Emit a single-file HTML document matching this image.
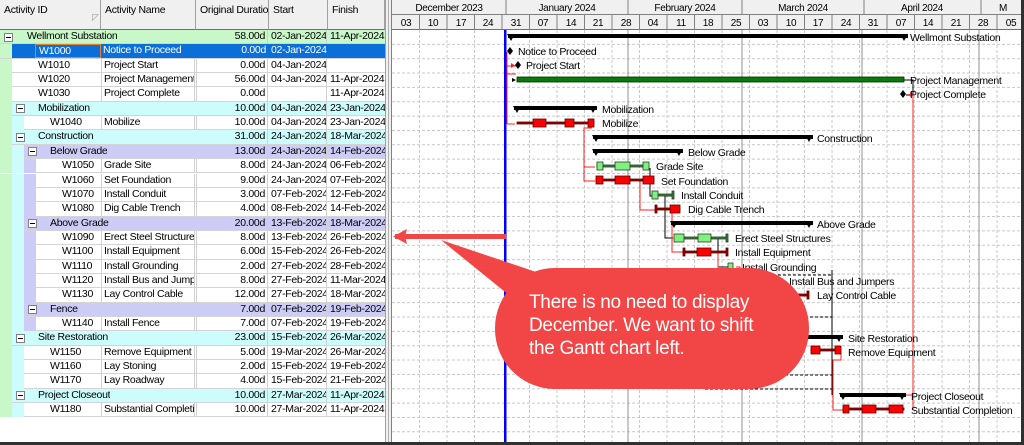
<!DOCTYPE html>
<html><head><meta charset="utf-8"><style>
*{margin:0;padding:0;box-sizing:border-box}
body{width:1024px;height:445px;overflow:hidden;background:#fff;font-family:"Liberation Sans",Arial,sans-serif;font-size:10.5px;letter-spacing:-0.3px;color:#000;position:relative}
.hd{position:absolute;top:0;height:30px;background:#f0f0f0;border-right:1px solid #a0a0a0;border-bottom:1px solid #707070;padding:4px 0 0 4px;font-size:10.5px;white-space:nowrap;overflow:hidden}
.r{position:absolute;left:0;width:385px;height:14.35px;border-bottom:1px solid #d4d4d4;line-height:13px;white-space:nowrap}
.r>div{position:absolute;top:0;height:13.5px;overflow:hidden}
.g{background:#c8f7c8}.c{background:#ccfcfc}.l{background:#ccccf6}.w{background:#fff}
.b{border-right:1px solid #d0d0d0}
.mb{position:absolute;width:9px!important;height:9px!important;top:2.5px!important;border:1px solid #808080;background:#fff}
.mb:after{content:"";position:absolute;left:1px;top:3px;width:5px;height:1px;background:#000}
.du{left:196px;width:72px;text-align:right;padding-right:2px}
.st{left:269px;width:58px;padding-left:2px}
.fi{left:328px;width:57px;padding-left:2px}
.nm{left:101px;width:94px;padding-left:2px;overflow:hidden}
svg text{letter-spacing:-0.3px}
</style></head><body>
<div class="hd" style="left:0;width:101px">Activity ID<span style="position:absolute;left:92px;top:12px;color:#999;font-size:9px">◸</span></div>
<div class="hd" style="left:101px;width:95px">Activity Name</div>
<div class="hd" style="left:196px;width:73px">Original Duration</div>
<div class="hd" style="left:269px;width:59px">Start</div>
<div class="hd" style="left:328px;width:57px">Finish</div>

<div class="r g" style="top:30px"><div class="mb" style="left:4px"></div><div style="left:27px">Wellmont Substation</div><div class="du b">58.00d</div><div class="st b">02-Jan-2024</div><div class="fi">11-Apr-2024</div></div>
<div class="r" style="top:44.35px;background:#0a6fd8;color:#fff"><div class="g" style="left:0;width:12px"></div><div style="left:35px;width:66px;border:1px solid #e08030;padding-left:3px">W1000</div><div class="nm">Notice to Proceed</div><div class="du">0.00d</div><div class="st">02-Jan-2024</div><div class="fi"></div></div>
<div class="r w" style="top:58.7px"><div class="g" style="left:0;width:12px;height:14.35px"></div><div style="left:38px">W1010</div><div class="nm b" style="border-left:1px solid #d0d0d0">Project Start</div><div class="du b" style="border-left:1px solid #d0d0d0">0.00d</div><div class="st b">04-Jan-2024</div><div class="fi"></div></div>
<div class="r w" style="top:73.05px"><div class="g" style="left:0;width:12px;height:14.35px"></div><div style="left:38px">W1020</div><div class="nm b" style="border-left:1px solid #d0d0d0">Project Management</div><div class="du b" style="border-left:1px solid #d0d0d0">56.00d</div><div class="st b">04-Jan-2024</div><div class="fi">11-Apr-2024</div></div>
<div class="r w" style="top:87.4px"><div class="g" style="left:0;width:12px;height:14.35px"></div><div style="left:38px">W1030</div><div class="nm b" style="border-left:1px solid #d0d0d0">Project Complete</div><div class="du b" style="border-left:1px solid #d0d0d0">0.00d</div><div class="st b"></div><div class="fi">11-Apr-2024</div></div>
<div class="r c" style="top:101.75px"><div class="g" style="left:0;width:12px;height:14.35px"></div><div class="mb" style="left:16px"></div><div style="left:38px">Mobilization</div><div class="du b">10.00d</div><div class="st b">04-Jan-2024</div><div class="fi">23-Jan-2024</div></div>
<div class="r w" style="top:116.1px"><div class="g" style="left:0;width:12px;height:14.35px"></div><div class="c" style="left:12px;width:12px;height:14.35px"></div><div style="left:50px">W1040</div><div class="nm b" style="border-left:1px solid #d0d0d0">Mobilize</div><div class="du b" style="border-left:1px solid #d0d0d0">10.00d</div><div class="st b">04-Jan-2024</div><div class="fi">23-Jan-2024</div></div>
<div class="r c" style="top:130.45px"><div class="g" style="left:0;width:12px;height:14.35px"></div><div class="mb" style="left:16px"></div><div style="left:38px">Construction</div><div class="du b">31.00d</div><div class="st b">24-Jan-2024</div><div class="fi">18-Mar-2024</div></div>
<div class="r l" style="top:144.8px"><div class="g" style="left:0;width:12px;height:14.35px"></div><div class="c" style="left:12px;width:12px;height:14.35px"></div><div class="mb" style="left:28px"></div><div style="left:50px">Below Grade</div><div class="du b">13.00d</div><div class="st b">24-Jan-2024</div><div class="fi">14-Feb-2024</div></div>
<div class="r w" style="top:159.15px"><div class="g" style="left:0;width:12px;height:14.35px"></div><div class="c" style="left:12px;width:12px;height:14.35px"></div><div class="l" style="left:24px;width:12px;height:14.35px"></div><div style="left:62px">W1050</div><div class="nm b" style="border-left:1px solid #d0d0d0">Grade Site</div><div class="du b" style="border-left:1px solid #d0d0d0">8.00d</div><div class="st b">24-Jan-2024</div><div class="fi">06-Feb-2024</div></div>
<div class="r w" style="top:173.5px"><div class="g" style="left:0;width:12px;height:14.35px"></div><div class="c" style="left:12px;width:12px;height:14.35px"></div><div class="l" style="left:24px;width:12px;height:14.35px"></div><div style="left:62px">W1060</div><div class="nm b" style="border-left:1px solid #d0d0d0">Set Foundation</div><div class="du b" style="border-left:1px solid #d0d0d0">9.00d</div><div class="st b">24-Jan-2024</div><div class="fi">07-Feb-2024</div></div>
<div class="r w" style="top:187.85px"><div class="g" style="left:0;width:12px;height:14.35px"></div><div class="c" style="left:12px;width:12px;height:14.35px"></div><div class="l" style="left:24px;width:12px;height:14.35px"></div><div style="left:62px">W1070</div><div class="nm b" style="border-left:1px solid #d0d0d0">Install Conduit</div><div class="du b" style="border-left:1px solid #d0d0d0">3.00d</div><div class="st b">07-Feb-2024</div><div class="fi">12-Feb-2024</div></div>
<div class="r w" style="top:202.2px"><div class="g" style="left:0;width:12px;height:14.35px"></div><div class="c" style="left:12px;width:12px;height:14.35px"></div><div class="l" style="left:24px;width:12px;height:14.35px"></div><div style="left:62px">W1080</div><div class="nm b" style="border-left:1px solid #d0d0d0">Dig Cable Trench</div><div class="du b" style="border-left:1px solid #d0d0d0">4.00d</div><div class="st b">08-Feb-2024</div><div class="fi">14-Feb-2024</div></div>
<div class="r l" style="top:216.55px"><div class="g" style="left:0;width:12px;height:14.35px"></div><div class="c" style="left:12px;width:12px;height:14.35px"></div><div class="mb" style="left:28px"></div><div style="left:50px">Above Grade</div><div class="du b">20.00d</div><div class="st b">13-Feb-2024</div><div class="fi">18-Mar-2024</div></div>
<div class="r w" style="top:230.9px"><div class="g" style="left:0;width:12px;height:14.35px"></div><div class="c" style="left:12px;width:12px;height:14.35px"></div><div class="l" style="left:24px;width:12px;height:14.35px"></div><div style="left:62px">W1090</div><div class="nm b" style="border-left:1px solid #d0d0d0">Erect Steel Structures</div><div class="du b" style="border-left:1px solid #d0d0d0">8.00d</div><div class="st b">13-Feb-2024</div><div class="fi">26-Feb-2024</div></div>
<div class="r w" style="top:245.25px"><div class="g" style="left:0;width:12px;height:14.35px"></div><div class="c" style="left:12px;width:12px;height:14.35px"></div><div class="l" style="left:24px;width:12px;height:14.35px"></div><div style="left:62px">W1100</div><div class="nm b" style="border-left:1px solid #d0d0d0">Install Equipment</div><div class="du b" style="border-left:1px solid #d0d0d0">6.00d</div><div class="st b">15-Feb-2024</div><div class="fi">26-Feb-2024</div></div>
<div class="r w" style="top:259.6px"><div class="g" style="left:0;width:12px;height:14.35px"></div><div class="c" style="left:12px;width:12px;height:14.35px"></div><div class="l" style="left:24px;width:12px;height:14.35px"></div><div style="left:62px">W1110</div><div class="nm b" style="border-left:1px solid #d0d0d0">Install Grounding</div><div class="du b" style="border-left:1px solid #d0d0d0">2.00d</div><div class="st b">27-Feb-2024</div><div class="fi">28-Feb-2024</div></div>
<div class="r w" style="top:273.95px"><div class="g" style="left:0;width:12px;height:14.35px"></div><div class="c" style="left:12px;width:12px;height:14.35px"></div><div class="l" style="left:24px;width:12px;height:14.35px"></div><div style="left:62px">W1120</div><div class="nm b" style="border-left:1px solid #d0d0d0">Install Bus and Jumpers</div><div class="du b" style="border-left:1px solid #d0d0d0">8.00d</div><div class="st b">27-Feb-2024</div><div class="fi">11-Mar-2024</div></div>
<div class="r w" style="top:288.3px"><div class="g" style="left:0;width:12px;height:14.35px"></div><div class="c" style="left:12px;width:12px;height:14.35px"></div><div class="l" style="left:24px;width:12px;height:14.35px"></div><div style="left:62px">W1130</div><div class="nm b" style="border-left:1px solid #d0d0d0">Lay Control Cable</div><div class="du b" style="border-left:1px solid #d0d0d0">12.00d</div><div class="st b">27-Feb-2024</div><div class="fi">18-Mar-2024</div></div>
<div class="r l" style="top:302.65px"><div class="g" style="left:0;width:12px;height:14.35px"></div><div class="c" style="left:12px;width:12px;height:14.35px"></div><div class="mb" style="left:28px"></div><div style="left:50px">Fence</div><div class="du b">7.00d</div><div class="st b">07-Feb-2024</div><div class="fi">19-Feb-2024</div></div>
<div class="r w" style="top:317px"><div class="g" style="left:0;width:12px;height:14.35px"></div><div class="c" style="left:12px;width:12px;height:14.35px"></div><div class="l" style="left:24px;width:12px;height:14.35px"></div><div style="left:62px">W1140</div><div class="nm b" style="border-left:1px solid #d0d0d0">Install Fence</div><div class="du b" style="border-left:1px solid #d0d0d0">7.00d</div><div class="st b">07-Feb-2024</div><div class="fi">19-Feb-2024</div></div>
<div class="r c" style="top:331.35px"><div class="g" style="left:0;width:12px;height:14.35px"></div><div class="mb" style="left:16px"></div><div style="left:38px">Site Restoration</div><div class="du b">23.00d</div><div class="st b">15-Feb-2024</div><div class="fi">26-Mar-2024</div></div>
<div class="r w" style="top:345.7px"><div class="g" style="left:0;width:12px;height:14.35px"></div><div class="c" style="left:12px;width:12px;height:14.35px"></div><div style="left:50px">W1150</div><div class="nm b" style="border-left:1px solid #d0d0d0">Remove Equipment</div><div class="du b" style="border-left:1px solid #d0d0d0">5.00d</div><div class="st b">19-Mar-2024</div><div class="fi">26-Mar-2024</div></div>
<div class="r w" style="top:360.05px"><div class="g" style="left:0;width:12px;height:14.35px"></div><div class="c" style="left:12px;width:12px;height:14.35px"></div><div style="left:50px">W1160</div><div class="nm b" style="border-left:1px solid #d0d0d0">Lay Stoning</div><div class="du b" style="border-left:1px solid #d0d0d0">2.00d</div><div class="st b">15-Feb-2024</div><div class="fi">19-Feb-2024</div></div>
<div class="r w" style="top:374.4px"><div class="g" style="left:0;width:12px;height:14.35px"></div><div class="c" style="left:12px;width:12px;height:14.35px"></div><div style="left:50px">W1170</div><div class="nm b" style="border-left:1px solid #d0d0d0">Lay Roadway</div><div class="du b" style="border-left:1px solid #d0d0d0">4.00d</div><div class="st b">15-Feb-2024</div><div class="fi">21-Feb-2024</div></div>
<div class="r c" style="top:388.75px"><div class="g" style="left:0;width:12px;height:14.35px"></div><div class="mb" style="left:16px"></div><div style="left:38px">Project Closeout</div><div class="du b">10.00d</div><div class="st b">27-Mar-2024</div><div class="fi">11-Apr-2024</div></div>
<div class="r w" style="top:403.1px"><div class="g" style="left:0;width:12px;height:14.35px"></div><div class="c" style="left:12px;width:12px;height:14.35px"></div><div style="left:50px">W1180</div><div class="nm b" style="border-left:1px solid #d0d0d0">Substantial Completion</div><div class="du b" style="border-left:1px solid #d0d0d0">10.00d</div><div class="st b">27-Mar-2024</div><div class="fi">11-Apr-2024</div></div>

<svg width="1024" height="445" style="position:absolute;left:0;top:0" font-family="Liberation Sans, Arial, sans-serif" font-size="10.5">
<rect x="385" y="0" width="7" height="445" fill="#f0f0f0"/>
<line x1="385.5" y1="0" x2="385.5" y2="445" stroke="#a0a0a0"/>
<line x1="388.5" y1="0" x2="388.5" y2="445" stroke="#b0b0b0"/>
<line x1="391.5" y1="0" x2="391.5" y2="445" stroke="#808080"/>
<rect x="392" y="0" width="632" height="30" fill="#f0f0f0"/>
<line x1="392" y1="14.5" x2="1024" y2="14.5" stroke="#808080"/>
<line x1="392" y1="29.5" x2="1024" y2="29.5" stroke="#707070"/>
<g stroke="#808080">
<line x1="506" y1="0" x2="506" y2="15"/><line x1="628" y1="0" x2="628" y2="15"/><line x1="742" y1="0" x2="742" y2="15"/><line x1="864" y1="0" x2="864" y2="15"/><line x1="981" y1="0" x2="981" y2="15"/>
</g>
<g font-size="10" text-anchor="middle">
<text x="449" y="11">December 2023</text><text x="567" y="11">January 2024</text><text x="685" y="11">February 2024</text><text x="803" y="11">March 2024</text><text x="922" y="11">April 2024</text><text x="1003" y="11">M</text>
</g>
<g stroke="#808080">
<line x1="419.5" y1="15" x2="419.5" y2="30"/><line x1="447" y1="15" x2="447" y2="30"/><line x1="474.5" y1="15" x2="474.5" y2="30"/><line x1="502" y1="15" x2="502" y2="30"/><line x1="529.5" y1="15" x2="529.5" y2="30"/><line x1="557" y1="15" x2="557" y2="30"/><line x1="584.5" y1="15" x2="584.5" y2="30"/><line x1="612" y1="15" x2="612" y2="30"/><line x1="639.5" y1="15" x2="639.5" y2="30"/><line x1="667" y1="15" x2="667" y2="30"/><line x1="694.5" y1="15" x2="694.5" y2="30"/><line x1="722" y1="15" x2="722" y2="30"/><line x1="749.5" y1="15" x2="749.5" y2="30"/><line x1="777" y1="15" x2="777" y2="30"/><line x1="804.5" y1="15" x2="804.5" y2="30"/><line x1="832" y1="15" x2="832" y2="30"/><line x1="859.5" y1="15" x2="859.5" y2="30"/><line x1="887" y1="15" x2="887" y2="30"/><line x1="914.5" y1="15" x2="914.5" y2="30"/><line x1="942" y1="15" x2="942" y2="30"/><line x1="969.5" y1="15" x2="969.5" y2="30"/><line x1="997" y1="15" x2="997" y2="30"/>
</g>
<g font-size="10" text-anchor="middle">
<text x="406" y="26">03</text><text x="433" y="26">10</text><text x="461" y="26">17</text><text x="488" y="26">24</text><text x="516" y="26">31</text><text x="543" y="26">07</text><text x="571" y="26">14</text><text x="598" y="26">21</text><text x="626" y="26">28</text><text x="653" y="26">04</text><text x="681" y="26">11</text><text x="708" y="26">18</text><text x="736" y="26">25</text><text x="763" y="26">03</text><text x="791" y="26">10</text><text x="818" y="26">17</text><text x="846" y="26">24</text><text x="873" y="26">31</text><text x="901" y="26">07</text><text x="928" y="26">14</text><text x="956" y="26">21</text><text x="983" y="26">28</text><text x="1011" y="26">05</text>
</g>
<g stroke="#c8c8c8" stroke-dasharray="3,2">
<line x1="419.5" y1="30" x2="419.5" y2="443"/><line x1="447" y1="30" x2="447" y2="443"/><line x1="474.5" y1="30" x2="474.5" y2="443"/><line x1="529.5" y1="30" x2="529.5" y2="443"/><line x1="557" y1="30" x2="557" y2="443"/><line x1="584.5" y1="30" x2="584.5" y2="443"/><line x1="612" y1="30" x2="612" y2="443"/><line x1="639.5" y1="30" x2="639.5" y2="443"/><line x1="667" y1="30" x2="667" y2="443"/><line x1="694.5" y1="30" x2="694.5" y2="443"/><line x1="722" y1="30" x2="722" y2="443"/><line x1="749.5" y1="30" x2="749.5" y2="443"/><line x1="777" y1="30" x2="777" y2="443"/><line x1="804.5" y1="30" x2="804.5" y2="443"/><line x1="832" y1="30" x2="832" y2="443"/><line x1="859.5" y1="30" x2="859.5" y2="443"/><line x1="887" y1="30" x2="887" y2="443"/><line x1="914.5" y1="30" x2="914.5" y2="443"/><line x1="942" y1="30" x2="942" y2="443"/><line x1="969.5" y1="30" x2="969.5" y2="443"/><line x1="997" y1="30" x2="997" y2="443"/>
<line x1="392" y1="44.35" x2="1024" y2="44.35"/><line x1="392" y1="58.7" x2="1024" y2="58.7"/><line x1="392" y1="73.05" x2="1024" y2="73.05"/><line x1="392" y1="87.4" x2="1024" y2="87.4"/><line x1="392" y1="101.75" x2="1024" y2="101.75"/><line x1="392" y1="116.1" x2="1024" y2="116.1"/><line x1="392" y1="130.45" x2="1024" y2="130.45"/><line x1="392" y1="144.8" x2="1024" y2="144.8"/><line x1="392" y1="159.15" x2="1024" y2="159.15"/><line x1="392" y1="173.5" x2="1024" y2="173.5"/><line x1="392" y1="187.85" x2="1024" y2="187.85"/><line x1="392" y1="202.2" x2="1024" y2="202.2"/><line x1="392" y1="216.55" x2="1024" y2="216.55"/><line x1="392" y1="230.9" x2="1024" y2="230.9"/><line x1="392" y1="245.25" x2="1024" y2="245.25"/><line x1="392" y1="259.6" x2="1024" y2="259.6"/><line x1="392" y1="273.95" x2="1024" y2="273.95"/><line x1="392" y1="288.3" x2="1024" y2="288.3"/><line x1="392" y1="302.65" x2="1024" y2="302.65"/><line x1="392" y1="317" x2="1024" y2="317"/><line x1="392" y1="331.35" x2="1024" y2="331.35"/><line x1="392" y1="345.7" x2="1024" y2="345.7"/><line x1="392" y1="360.05" x2="1024" y2="360.05"/><line x1="392" y1="374.4" x2="1024" y2="374.4"/><line x1="392" y1="388.75" x2="1024" y2="388.75"/><line x1="392" y1="403.1" x2="1024" y2="403.1"/><line x1="392" y1="417.45" x2="1024" y2="417.45"/><line x1="392" y1="431.8" x2="1024" y2="431.8"/>
</g>
<g stroke="#909090">
<line x1="628" y1="30" x2="628" y2="443"/><line x1="742" y1="30" x2="742" y2="443"/><line x1="862" y1="30" x2="862" y2="443"/><line x1="979" y1="30" x2="979" y2="443"/>
</g>
<rect x="504" y="30" width="2.5" height="415" fill="#0000ff"/>
<g fill="none" stroke-width="1">
<path d="M507 52 V87 M507 74 H516 M507 66 H517 M507 124 H515 M507 60 V124" stroke="#ff2020"/>
<path d="M904 80 H913 V95 H906" stroke="#000"/>
<path d="M913 95 V410 M906 395 H913" stroke="#ff2020"/>
<path d="M592 128 H584 V181 H595 M584 167 H595" stroke="#ff2020"/>
<path d="M650 168 V196 H652" stroke="#000"/>
<path d="M653 181 H640 V210 H655" stroke="#ff2020"/>
<path d="M673 196 H665 V238 H673" stroke="#000"/>
<path d="M680 210 H672 V252 H683" stroke="#ff2020"/>
<path d="M727 238 H718 V267 H728" stroke="#000"/>
<path d="M727 252 H718 V267" stroke="#ff2020"/>
<path d="M736 267 H740 V296 H808" stroke="#ff2020"/>
<path d="M703 275 H832 V396" stroke="#000" stroke-dasharray="3,2"/>
<path d="M832 270 V395" stroke="#000"/>
<path d="M705 317 H832 M705 375 H832 M705 389 H832" stroke="#000" stroke-dasharray="3,2"/>
<path d="M841 353 V360 H833 V410 H843" stroke="#ff2020"/>
</g>
<g fill="#000">
<rect x="508" y="34" width="400" height="4"/><polygon points="507,34 515,34 511,41"/><polygon points="900,34 908,34 904,41"/>
<rect x="514" y="106" width="83" height="4"/><polygon points="513,106 521,106 517,113"/><polygon points="589,106 597,106 593,113"/>
<rect x="593" y="135" width="220" height="4"/><polygon points="592,135 600,135 596,142"/><polygon points="805,135 813,135 809,142"/>
<rect x="593" y="149" width="90" height="4"/><polygon points="592,149 600,149 596,156"/><polygon points="675,149 683,149 679,156"/>
<rect x="671" y="221" width="142" height="4"/><polygon points="670,221 678,221 674,228"/><polygon points="805,221 813,221 809,228"/>
<rect x="800" y="335" width="43" height="4"/><polygon points="835,335 843,335 839,342"/>
<rect x="840" y="393" width="66" height="4"/><polygon points="839,393 847,393 843,400"/><polygon points="898,393 906,393 902,400"/>
</g>
<polygon points="510,47 513,51 510,55 507,51" fill="#000"/>
<polygon points="518,61 521,65 518,69 515,65" fill="#000"/>
<polygon points="903,90 906,94 903,98 900,94" fill="#000"/>
<polygon points="511,63 515,65.5 511,68" fill="#ff2020"/>
<polygon points="910,92 914,94.5 910,97" fill="#ff2020"/>
<rect x="517" y="77" width="387" height="5" fill="#0a7a0a" stroke="#003000" stroke-width="0.8"/>
<polygon points="512,78 516,80 512,82" fill="#000"/>
<g stroke="#600000" stroke-width="0.8">
<rect x="517" y="122" width="77" height="2" fill="#900"/>
<rect x="533" y="119" width="13" height="8" fill="#f00"/><rect x="565" y="119" width="9" height="8" fill="#f00"/><rect x="588" y="119" width="6" height="8" fill="#f00"/>
<rect x="596" y="179" width="58" height="2" fill="#900"/>
<rect x="596" y="176" width="7" height="8" fill="#f00"/><rect x="615" y="176" width="15" height="8" fill="#f00"/><rect x="643" y="176" width="11" height="8" fill="#f00"/>
<rect x="656" y="208" width="24" height="2" fill="#900"/><rect x="655" y="205" width="2" height="8" fill="#900"/>
<rect x="670" y="205" width="10" height="8" fill="#f00"/>
<rect x="683" y="251" width="44" height="2" fill="#900"/><rect x="683" y="248" width="2" height="8" fill="#900"/><rect x="726" y="248" width="2" height="8" fill="#900"/>
<rect x="697" y="248" width="14" height="8" fill="#f00"/>
<rect x="796" y="294" width="12" height="2" fill="#900"/><rect x="807" y="291" width="2" height="8" fill="#900"/>
<rect x="811" y="349" width="30" height="2" fill="#900"/>
<rect x="811" y="346" width="9" height="8" fill="#f00"/><rect x="835" y="346" width="6" height="8" fill="#f00"/>
<rect x="843" y="408" width="61" height="2" fill="#900"/>
<rect x="843" y="405" width="6" height="8" fill="#f00"/><rect x="862" y="405" width="14" height="8" fill="#f00"/><rect x="889" y="405" width="14" height="8" fill="#f00"/>
</g>
<g stroke="#204020" stroke-width="0.8">
<rect x="597" y="165" width="50" height="2" fill="#408040"/>
<rect x="597" y="162" width="6" height="8" fill="#80f080"/><rect x="615" y="162" width="15" height="8" fill="#80f080"/><rect x="643" y="162" width="6" height="8" fill="#80f080"/>
<rect x="652" y="194" width="21" height="2" fill="#408040"/><rect x="672" y="191" width="2" height="8" fill="#408040"/>
<rect x="652" y="191" width="6" height="8" fill="#80f080"/>
<rect x="674" y="237" width="53" height="2" fill="#408040"/><rect x="726" y="234" width="2" height="8" fill="#408040"/>
<rect x="674" y="234" width="10" height="8" fill="#80f080"/><rect x="698" y="234" width="13" height="8" fill="#80f080"/>
<rect x="728" y="263" width="5" height="8" fill="#80f080"/>
</g>
<g fill="#000">
<text x="910" y="41">Wellmont Substation</text>
<text x="518" y="55">Notice to Proceed</text>
<text x="526" y="69">Project Start</text>
<text x="910" y="84">Project Management</text>
<text x="910" y="98">Project Complete</text>
<text x="602" y="113">Mobilization</text>
<text x="602" y="127">Mobilize</text>
<text x="817" y="142">Construction</text>
<text x="688" y="156">Below Grade</text>
<text x="656" y="170">Grade Site</text>
<text x="661" y="185">Set Foundation</text>
<text x="681" y="199">Install Conduit</text>
<text x="688" y="213">Dig Cable Trench</text>
<text x="817" y="228">Above Grade</text>
<text x="735" y="242">Erect Steel Structures</text>
<text x="735" y="256">Install Equipment</text>
<text x="742" y="271">Install Grounding</text>
<text x="789" y="285">Install Bus and Jumpers</text>
<text x="817" y="299">Lay Control Cable</text>
<text x="848" y="342">Site Restoration</text>
<text x="848" y="356">Remove Equipment</text>
<text x="911" y="400">Project Closeout</text>
<text x="911" y="414">Substantial Completion</text>
</g>
<g fill="#f24646">
<rect x="395" y="234" width="111" height="5"/>
<polygon points="393,236.5 407,229 405,236.5 407,244"/>
<polygon points="441,240 545,275 515,300"/>
<rect x="495" y="268" width="314" height="121" rx="60" ry="60"/>
</g>
<g fill="#fff" font-size="19" style="letter-spacing:0">
<text x="529" y="308">There is no need to display</text>
<text x="529" y="331">December. We want to shift</text>
<text x="529" y="354">the Gantt chart left.</text>
</g>
<rect x="0" y="442" width="1024" height="3" fill="#303030"/>
<rect x="1021" y="0" width="3" height="445" fill="#303030"/>
</svg>
</body></html>
